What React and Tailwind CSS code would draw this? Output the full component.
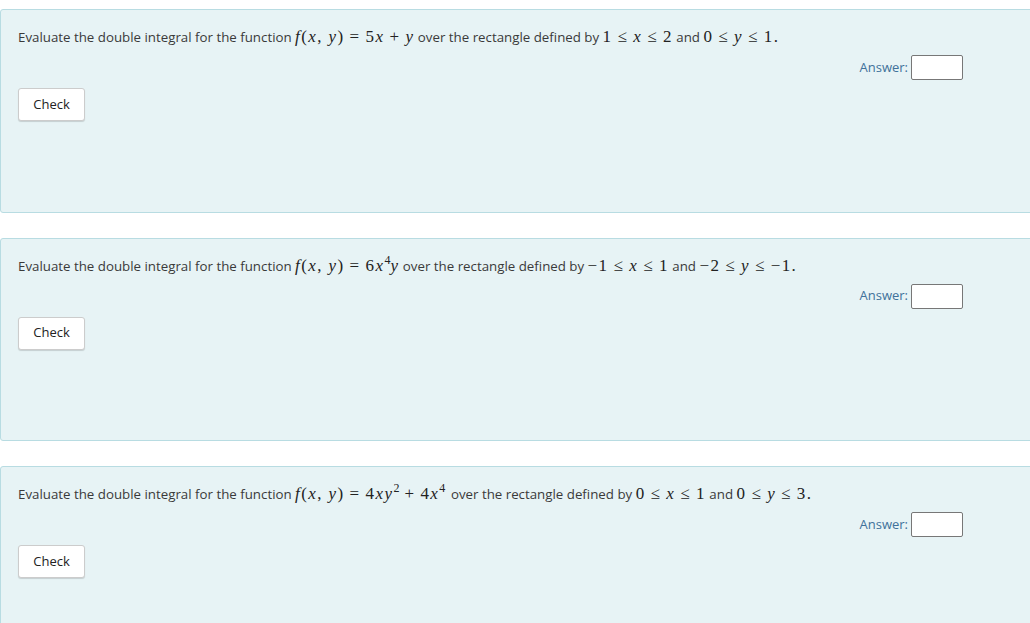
import React from 'react'

const M = ({ children }) => (
  <span className="whitespace-nowrap text-[17px] tracking-[1.4px] text-[#222]" style={{ fontFamily: '"Liberation Serif", "DejaVu Serif", serif' }}>
    {children}
  </span>
)
const I = ({ children }) => <i>{children}</i>
const Sup = ({ children }) => <sup className="text-[12px] -top-[7px] tracking-normal">{children}</sup>
const Op = ({ children }) => <span className="mx-[5px]">{children}</span>

const questions = [
  {
    fn: (
      <>
        <I>f</I>(<I>x</I>, <I>y</I>)<Op>=</Op>5<I>x</I><Op>+</Op><I>y</I>
      </>
    ),
    xr: (
      <>
        1<Op>≤</Op><I>x</I><Op>≤</Op>2
      </>
    ),
    yr: (
      <>
        0<Op>≤</Op><I>y</I><Op>≤</Op>1.
      </>
    ),
  },
  {
    fn: (
      <>
        <I>f</I>(<I>x</I>, <I>y</I>)<Op>=</Op>6<I>x</I><Sup>4</Sup><I>y</I>
      </>
    ),
    xr: (
      <>
        −1<Op>≤</Op><I>x</I><Op>≤</Op>1
      </>
    ),
    yr: (
      <>
        −2<Op>≤</Op><I>y</I><Op>≤</Op>−1.
      </>
    ),
  },
  {
    fn: (
      <>
        <I>f</I>(<I>x</I>, <I>y</I>)<Op>=</Op>4<I>xy</I><Sup>2</Sup><Op>+</Op>4<I>x</I><Sup>4</Sup>{' '}
      </>
    ),
    xr: (
      <>
        0<Op>≤</Op><I>x</I><Op>≤</Op>1
      </>
    ),
    yr: (
      <>
        0<Op>≤</Op><I>y</I><Op>≤</Op>3.
      </>
    ),
  },
]

function Question({ q }) {
  return (
    <div className="w-[1060px] h-[203.5px] shrink-0 rounded-[3px] border border-[#b8dce2] bg-[#e7f3f5] pl-[17px] pt-[17px]">
      <div className="text-[13.3px] text-[#3a3a3a] leading-[20px]">
        Evaluate the double integral for the function <M>{q.fn}</M> over the rectangle defined by <M>{q.xr}</M> and <M>{q.yr}</M>
      </div>
      <div className="mt-[8px] flex items-center justify-end w-[945px]">
        <span className="text-[13px] text-[#40719a] mr-[3px]">Answer:</span>
        <input type="text" className="w-[52px] h-[25px] rounded-[2px] border border-[#777] bg-white" />
      </div>
      <button
        type="button"
        className="mt-[8px] w-[67px] h-[33px] rounded-[3px] border border-[#ccc] bg-white text-[13px] text-[#222] shadow-[0_1px_1px_rgba(0,0,0,0.15)]"
      >
        Check
      </button>
    </div>
  )
}

export default function App() {
  return (
    <div className="w-[1030px] h-[623px] overflow-hidden bg-white pt-[9px]" style={{ fontFamily: '"Open Sans", "Noto Sans", sans-serif' }}>
      <div className="flex flex-col gap-[25px]">
        {questions.map((q, i) => (
          <Question key={i} q={q} />
        ))}
      </div>
    </div>
  )
}
